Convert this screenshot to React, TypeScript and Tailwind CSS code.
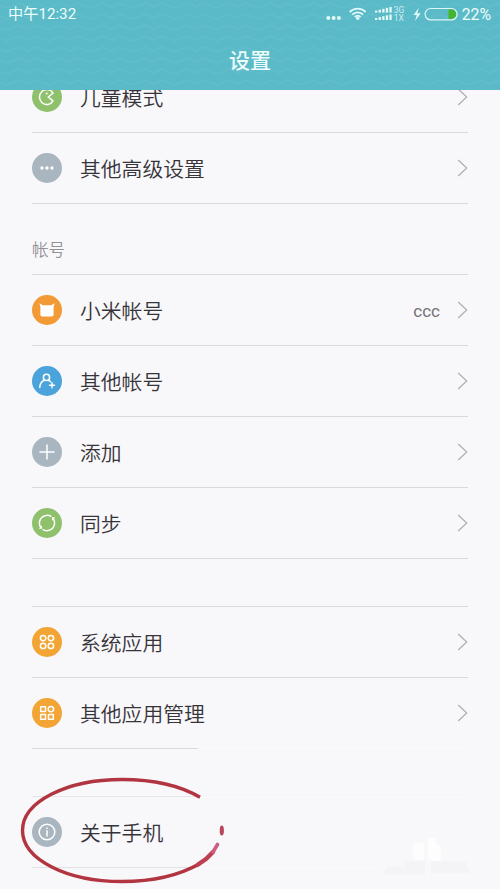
import type { ReactNode } from "react";

const white = { fill: "none", stroke: "#fff", strokeWidth: 1.5, strokeLinecap: "round", strokeLinejoin: "round" } as const;

function Badge({ color, children }: { color: string; children: ReactNode }) {
  return (
    <svg className={`h-[30px] w-[30px] shrink-0 ${color}`} viewBox="0 0 30 30">
      <circle cx="15" cy="15" r="15" fill="currentColor" />
      {children}
    </svg>
  );
}

const icons = {
  kids: (
    <Badge color="text-[#8fc16c]">
      <path {...white} d="M21 11.2C18.8 7 13.6 6.2 10.1 9.2C6.6 12.3 6.6 17.7 10.1 20.8C13.6 23.8 18.8 23 21 18.8L16.2 15Z" />
      <circle cx="14.7" cy="11.4" r="1" fill="#fff" />
    </Badge>
  ),
  more: (
    <Badge color="text-[#a9b5bf]">
      <g fill="#fff">
        <circle cx="10" cy="15" r="1.7" />
        <circle cx="15" cy="15" r="1.7" />
        <circle cx="20" cy="15" r="1.7" />
      </g>
    </Badge>
  ),
  mi: (
    <Badge color="text-[#f29a35]">
      <path fill="#fff" d="M7.4 8.3 10.8 10.3H19.2L22.6 8.3 21.6 12V19.5Q21.6 21.4 19.8 21.4H10.2Q8.4 21.4 8.4 19.5V12Z" />
    </Badge>
  ),
  user: (
    <Badge color="text-[#4ba3dc]">
      <circle {...white} cx="14.5" cy="11.4" r="3.1" />
      <path {...white} d="M7.8 21.5C7.9 17.7 9.7 15.5 12.3 14.3M16.7 14.3 18.5 15.6M17.5 19.2H22.5M20 16.7V21.7" />
    </Badge>
  ),
  add: (
    <Badge color="text-[#a9b5bf]">
      <path {...white} d="M8 15H22M15 8V22" />
    </Badge>
  ),
  sync: (
    <Badge color="text-[#8fc16c]">
      <path {...white} strokeLinecap="butt" d="M9 19.8A7.7 7.7 0 0 1 19.4 8.7M21 10.2A7.7 7.7 0 0 1 10.6 21.3" />
      <path {...white} strokeWidth="1.1" d="M9.5 18.3V20.3H7.6M20.5 11.7V9.7H22.4" />
    </Badge>
  ),
  system: (
    <Badge color="text-[#f2a535]">
      <g {...white}>
        <circle cx="11.1" cy="11.1" r="2.7" />
        <circle cx="18.9" cy="11.1" r="2.7" />
        <circle cx="11.1" cy="18.9" r="2.7" />
        <circle cx="18.9" cy="18.9" r="2.7" />
      </g>
    </Badge>
  ),
  apps: (
    <Badge color="text-[#f2a535]">
      <g {...white}>
        <rect x="8.7" y="8.7" width="4.8" height="4.8" />
        <circle cx="18.9" cy="11.1" r="2.7" />
        <rect x="8.7" y="16.5" width="4.8" height="4.8" />
        <rect x="16.5" y="16.5" width="4.8" height="4.8" />
      </g>
    </Badge>
  ),
  info: (
    <Badge color="text-[#a9b5bf]">
      <circle {...white} cx="15" cy="15" r="7.8" />
      <path {...white} strokeLinecap="butt" d="M15 13.3V19.5M15 10.5V12" />
    </Badge>
  ),
};

function Row({ icon, label, value, arrow = true, line = "border-[#dad9dc]" }: { icon: ReactNode; label: string; value?: string; arrow?: boolean; line?: string }) {
  return (
    <div className={`flex h-[71px] items-center border-b ${line}`}>
      {icon}
      <span className="ml-[18px] flex-1 text-[20.8px] leading-[28px] font-[350] whitespace-nowrap text-[#363438]">{label}</span>
      {value && <span className="mt-[3px] mr-[17px] font-['Roboto','Noto_Sans_CJK_SC',sans-serif] text-[17px] leading-none text-[#747277]">{value}</span>}
      {arrow && (
        <svg className="h-[18px] w-[11px]" viewBox="0 0 11 18">
          <path d="M1.2 1 9.7 9 1.2 17" fill="none" stroke="#b1b0b4" strokeWidth="1.3" />
        </svg>
      )}
    </div>
  );
}

function StatusIcons() {
  return (
    <div className="flex items-center">
      <svg className="h-[24px] w-[67px]" viewBox="326 2 67 24">
        <g fill="#e3f8f9">
          <circle cx="328.3" cy="18" r="2" />
          <circle cx="333.6" cy="18" r="2" />
          <circle cx="338.9" cy="18" r="2" />
          <circle cx="357.7" cy="18.2" r="1.7" />
          {[0, 1, 2, 3, 4].map((i) => (
            <g key={i}>
              <rect x={375 + i * 3.6} y={12.6 - (2 + i * 0.9)} width="2.3" height={2 + i * 0.9} />
              <rect x={375 + i * 3.6} y={20 - (2 + i * 0.9)} width="2.3" height={2 + i * 0.9} />
            </g>
          ))}
        </g>
        <g fill="none" stroke="#e3f8f9" strokeWidth="1.8">
          <path d="M349.7 12A11.3 11.3 0 0 1 365.7 12M352.3 14.6A7.6 7.6 0 0 1 363.1 14.6M354.8 17A4.2 4.2 0 0 1 360.6 17" />
        </g>
      </svg>
      <div className="ml-px flex w-[19px] flex-col font-['Roboto',sans-serif] text-[8.5px] leading-[8px] text-[#cbeef1]">
        <span>3G</span>
        <span>1X</span>
      </div>
      <svg className="h-[24px] w-[47px]" viewBox="413 2 47 24">
        <path d="M418.8 7.8 413.6 15H416.8L415 21 420.8 13.2H417.3Z" fill="#e3f8f9" />
        <path fill="#45b52c" d="M448.5 9.5H451.5A4.7 4.7 0 0 1 451.5 18.9H448.5Z" />
        <rect x="425.1" y="8.5" width="32" height="11.4" rx="5.7" fill="none" stroke="#dcf6f6" strokeWidth="1.2" />
      </svg>
      <span className="ml-[2px] pt-px font-['Roboto',sans-serif] text-[15.8px] leading-none">22%</span>
    </div>
  );
}

export default function App() {
  return (
    <div className="relative flex h-[889px] w-[500px] flex-col overflow-hidden bg-[#f8f7fa] font-['Noto_Sans_CJK_SC',sans-serif]">
      <header className="relative h-[90px] shrink-0 bg-[#5bbac8] text-[#ecfcfc]">
        <svg className="absolute inset-0 h-full w-full" aria-hidden="true">
          <defs>
            <pattern id="waves" width="42" height="11" patternUnits="userSpaceOnUse">
              <path d="M-7 3 7 8 19 3 28 7 35 3 49 8M-7 14 7 19M-7 -8 7 -3" fill="none" stroke="#69c1cd" strokeWidth="1.6" opacity=".45" />
            </pattern>
          </defs>
          <rect width="500" height="90" fill="url(#waves)" />
        </svg>
        <div className="relative flex h-[28px] items-center justify-between pr-[9px] pl-[8px]">
          <span className="pt-px font-['Roboto','Noto_Sans_CJK_SC',sans-serif] text-[15.2px] leading-none">中午12:32</span>
          <StatusIcons />
        </div>
        <h1 className="relative mt-[20px] text-center text-[21px] leading-[22px] font-medium">设置</h1>
      </header>
      <main className="flex-1 overflow-hidden pr-[32px] pl-[32px]">
        <div className="-mt-[28px]">
          <Row icon={icons.kids} label="儿童模式" />
          <Row icon={icons.more} label="其他高级设置" />
          <h2 className="flex h-[71px] items-center border-b border-[#dad9dc] pt-[21px] text-[16.5px] leading-none font-[350] text-[#939196]">帐号</h2>
          <Row icon={icons.mi} label="小米帐号" value="ccc" />
          <Row icon={icons.user} label="其他帐号" />
          <Row icon={icons.add} label="添加" />
          <Row icon={icons.sync} label="同步" />
          <div className="h-[48px] border-b border-[#dad9dc]" />
          <Row icon={icons.system} label="系统应用" />
          <Row icon={icons.apps} label="其他应用管理" line="border-transparent" />
          <div className="-mt-px w-[166px] border-t border-[#dad9dc]" />
          <div className="h-[48px] w-[166px] border-b border-[#e6e5e8]" />
          <div className="w-[166px]">
            <Row icon={icons.info} label="关于手机" arrow={false} line="border-[#e2e1e4]" />
          </div>
        </div>
      </main>
      <svg className="pointer-events-none absolute bottom-0 left-0 h-[149px] w-[500px]" viewBox="0 740 500 149" aria-hidden="true">
        <g fill="none" stroke="#b23440" strokeWidth="3.4">
          <path d="M200 797.3C180 785.5 153 779.5 122 779.5C66 779.5 22.5 802 22.5 830.5C22.5 859 66 881.5 122 881.5C155 881.5 180 875 200 863.5" />
          <path d="M198 864.5 206 859 213 852" stroke="#bd4052" strokeWidth="4.4" strokeLinecap="round" strokeLinejoin="round" />
          <path d="M213 852 217.5 844.5" stroke="#cc5f80" strokeWidth="3.6" strokeLinecap="round" />
        </g>
        <ellipse cx="221.8" cy="830.5" rx="2.1" ry="5" fill="#b8465c" />
        <g fill="#fff">
          <rect x="413" y="843" width="11" height="17" rx="3" opacity=".7" />
          <rect x="428" y="837" width="8" height="10" rx="3" opacity=".7" />
          <rect x="428" y="845" width="13" height="16" rx="3" opacity=".7" />
        </g>
        <path d="M382 875 389 866 405 868V861H425V875ZM431 861H465L470 873H431Z" fill="#f4f3f6" />
        <path d="M200 748.5H468M200 797.5H468M200 868.5H382" stroke="#fbfafd" />
      </svg>
    </div>
  );
}
